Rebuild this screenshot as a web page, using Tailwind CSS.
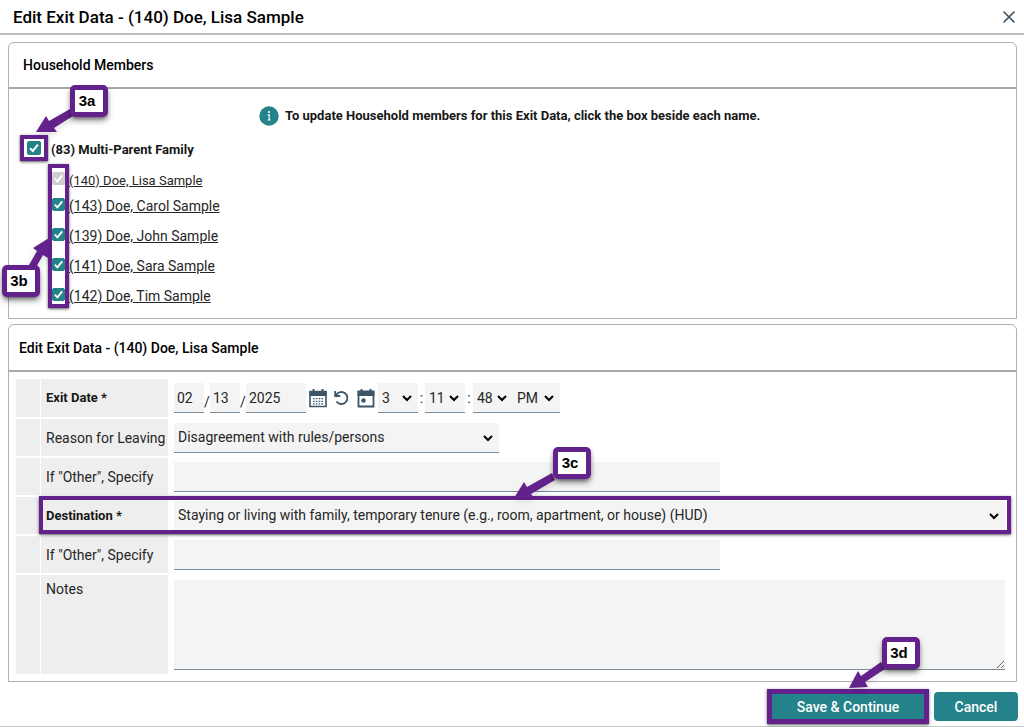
<!DOCTYPE html>
<html lang="en">
<head>
    <meta charset="UTF-8">
    <meta name="viewport" content="width=device-width, initial-scale=1.0">
    <title>Edit Exit Data</title>
    <script src="https://cdn.jsdelivr.net/npm/@tailwindcss/browser@4"></script>
</head>
<body class="bg-white font-['Roboto',sans-serif] text-[14px] leading-5 text-neutral-800">
    <svg class="hidden">
        <symbol id="check" viewBox="0 0 14 14"><path d="M3 7.2 5.8 10 11 3.6" fill="none" stroke="currentColor" stroke-width="2"/></symbol>
        <symbol id="chevron" viewBox="0 0 10 8"><path d="M1 2l4 4 4-4" fill="none" stroke="currentColor" stroke-width="2"/></symbol>
    </svg>

    <header class="flex h-[35px] items-center justify-between border-b-2 border-[#b9bec4] pl-[13px] pr-2">
        <h1 class="pt-px text-[17px] font-medium text-black">Edit Exit Data - (140) Doe, Lisa Sample</h1>
        <button type="button" aria-label="Close" class="text-[#3d5566]">
            <svg class="size-[14px]" viewBox="0 0 14 14"><path d="M2 2l10 10M12 2L2 12" fill="none" stroke="currentColor" stroke-width="1.7" stroke-linecap="round"/></svg>
        </button>
    </header>

    <main class="flex flex-col gap-[5px] px-2 pt-[7px]">
        <section class="mr-[-1px] rounded-t-md border border-[#b0b0b0]">
            <h2 class="flex h-[46px] items-center border-b-2 border-[#a8a8a8] pl-[14px] font-medium text-black">Household Members</h2>
            <div class="flex flex-col pb-[7px] pt-[17px]">
                <p class="flex items-center gap-1.5 pl-[250px] text-[13px] font-bold text-neutral-900">
                    <svg class="size-5" viewBox="0 0 20 20"><circle cx="10" cy="10" r="9.7" fill="#23828a"/><circle cx="10" cy="6" r="1.1" fill="#fff"/><path d="M8.6 8.8h1.6v5.2M8.6 14h3" fill="none" stroke="#fff" stroke-width="1.2"/></svg>
                    To update Household members for this Exit Data, click the box beside each name.
                </p>
                <div class="mt-[14px] flex h-5 items-center gap-[10px] pl-[18px]">
                    <div class="relative mb-1 grid">
                        <input type="checkbox" id="family" checked class="col-start-1 row-start-1 size-[14px] appearance-none rounded-xs border border-gray-500 checked:border-[#23828a] checked:bg-[#23828a]">
                        <svg class="pointer-events-none col-start-1 row-start-1 size-[14px] text-white"><use href="#check"/></svg>
                        <div class="pointer-events-none absolute -inset-x-[7px] -inset-y-[6px] border-4 border-[#63218c] shadow-sm shadow-black/50"></div>
                        <div class="pointer-events-none absolute -top-[56px] left-[43px]">
                            <svg class="absolute -left-[36px] top-[22px] h-[28px] w-[44px] overflow-visible drop-shadow-md" viewBox="0 0 44 28"><path d="M2 25 12 9l3 5L36 2l3 7-19 12 3 4z" fill="#63218c"/></svg>
                            <span class="relative flex h-8 w-[38px] items-center justify-center rounded-[5px] border-5 border-[#63218c] bg-white pr-1 font-['Liberation_Sans',sans-serif] text-[15px] font-bold text-black shadow-md shadow-black/50">3a</span>
                        </div>
                    </div>
                    <label for="family" class="text-[13px] font-bold text-neutral-900">(83) Multi-Parent Family</label>
                </div>
                <div class="relative ml-[43px] mt-[9px]">
                    <ul>
                        <li class="flex h-[22px] items-center gap-1">
                            <div class="mb-1 grid">
                                <input type="checkbox" id="m140" checked disabled class="col-start-1 row-start-1 size-[13px] appearance-none rounded-xs bg-[#cecece]">
                                <svg class="pointer-events-none col-start-1 row-start-1 size-[13px] text-white"><use href="#check"/></svg>
                            </div>
                            <label for="m140"><a href="#" class="text-[13px] underline">(140) Doe, Lisa Sample</a></label>
                        </li>
                        <li class="flex h-[30px] items-center gap-1">
                            <div class="mb-1 grid">
                                <input type="checkbox" id="m143" checked class="col-start-1 row-start-1 size-[13px] appearance-none rounded-xs border border-gray-500 checked:border-[#23828a] checked:bg-[#23828a]">
                                <svg class="pointer-events-none col-start-1 row-start-1 size-[13px] text-white"><use href="#check"/></svg>
                            </div>
                            <label for="m143"><a href="#" class="underline">(143) Doe, Carol Sample</a></label>
                        </li>
                        <li class="flex h-[30px] items-center gap-1">
                            <div class="mb-1 grid">
                                <input type="checkbox" id="m139" checked class="col-start-1 row-start-1 size-[13px] appearance-none rounded-xs border border-gray-500 checked:border-[#23828a] checked:bg-[#23828a]">
                                <svg class="pointer-events-none col-start-1 row-start-1 size-[13px] text-white"><use href="#check"/></svg>
                            </div>
                            <label for="m139"><a href="#" class="underline">(139) Doe, John Sample</a></label>
                        </li>
                        <li class="flex h-[30px] items-center gap-1">
                            <div class="mb-1 grid">
                                <input type="checkbox" id="m141" checked class="col-start-1 row-start-1 size-[13px] appearance-none rounded-xs border border-gray-500 checked:border-[#23828a] checked:bg-[#23828a]">
                                <svg class="pointer-events-none col-start-1 row-start-1 size-[13px] text-white"><use href="#check"/></svg>
                            </div>
                            <label for="m141"><a href="#" class="underline">(141) Doe, Sara Sample</a></label>
                        </li>
                        <li class="flex h-[30px] items-center gap-1">
                            <div class="mb-1 grid">
                                <input type="checkbox" id="m142" checked class="col-start-1 row-start-1 size-[13px] appearance-none rounded-xs border border-gray-500 checked:border-[#23828a] checked:bg-[#23828a]">
                                <svg class="pointer-events-none col-start-1 row-start-1 size-[13px] text-white"><use href="#check"/></svg>
                            </div>
                            <label for="m142"><a href="#" class="underline">(142) Doe, Tim Sample</a></label>
                        </li>
                    </ul>
                    <div class="pointer-events-none absolute -left-1 -top-[5px] h-[144px] w-[21px] border-4 border-[#63218c] shadow-sm shadow-black/50"></div>
                    <div class="pointer-events-none absolute -left-[50px] top-24">
                        <svg class="absolute -top-[30px] left-[26px] h-[40px] w-[24px] overflow-visible drop-shadow-md" viewBox="0 0 24 40"><path d="M21 3 5 13l4 3L1 30l6 4 8-14 5 3z" fill="#63218c"/></svg>
                        <span class="relative flex h-8 w-[38px] items-center justify-center rounded-[5px] border-5 border-[#63218c] bg-white pr-1 font-['Liberation_Sans',sans-serif] text-[15px] font-bold text-black shadow-md shadow-black/50">3b</span>
                    </div>
                </div>
            </div>
        </section>

        <form id="exit" onsubmit="event.preventDefault()" class="mr-[-1px] rounded-t-md border border-[#b0b0b0]">
            <h2 class="flex h-[47px] items-center border-b-2 border-[#a8a8a8] pl-[10px] font-medium text-black">Edit Exit Data - (140) Doe, Lisa Sample</h2>
            <div class="flex flex-col gap-[2px] p-[7px]">
                <div class="grid min-h-[38px] grid-cols-[24px_127px_1fr] gap-x-px">
                    <div class="bg-[#eeeeee]"></div>
                    <label for="month" class="flex items-center bg-[#eeeeee] pl-[5px] text-[13px] font-bold text-neutral-900">Exit Date *</label>
                    <div class="flex items-center pl-[5px]">
                        <input id="month" value="02" class="h-[30px] w-[30px] border-b border-[#7b8c9a] bg-[#f4f4f4] pl-[3px]">
                        <span class="w-1.5 pt-2 text-center">/</span>
                        <input aria-label="Day" value="13" class="h-[30px] w-[30px] border-b border-[#7b8c9a] bg-[#f4f4f4] pl-[3px]">
                        <span class="w-1.5 pt-2 text-center">/</span>
                        <input aria-label="Year" value="2025" class="h-[30px] w-[60px] border-b border-[#7b8c9a] bg-[#f4f4f4] pl-[3px]">
                        <div class="flex items-center gap-[6px] px-[3px] text-[#3d5566]">
                            <button type="button" aria-label="Pick date">
                                <svg class="h-5 w-[18px]" viewBox="0 0 18 20"><path d="M1 3.5h16v15H1z" fill="none" stroke="currentColor" stroke-width="1.6"/><path d="M.5 3h17v5H.5zM3.5 1h2v3h-2zM12.5 1h2v3h-2z" fill="currentColor"/><path d="M4 10.700h10M4 13.300h10M4 15.900h10" stroke="currentColor" stroke-width="1.300" stroke-dasharray="1.600 1.200"/></svg>
                            </button>
                            <button type="button" aria-label="Reset date">
                                <svg class="h-5 w-[18px]" viewBox="0 0 18 20"><path d="M3.200 7A6 6 0 1 1 3.500 13.500" fill="none" stroke="currentColor" stroke-width="1.800"/><path d="M2.200 3v5h5" fill="none" stroke="currentColor" stroke-width="1.800"/></svg>
                            </button>
                            <button type="button" aria-label="Today">
                                <svg class="h-5 w-[18px]" viewBox="0 0 18 20"><path d="M1.500 3.500h15v15h-15z" fill="none" stroke="currentColor" stroke-width="1.800"/><path d="M.6 3h16.800v5H.6zM3.500 1h2v3h-2zM12.500 1h2v3h-2z" fill="currentColor"/><circle cx="6.500" cy="12.500" r="2.200" fill="currentColor"/></svg>
                            </button>
                        </div>
                        <div class="grid w-10 items-center">
                            <select aria-label="Hour" class="col-start-1 row-start-1 h-[30px] w-full appearance-none border-b border-[#7b8c9a] bg-[#f4f4f4] pl-1"><option>3</option></select>
                            <svg class="pointer-events-none col-start-1 row-start-1 mr-1.5 h-2 w-2.5 justify-self-end text-black"><use href="#chevron"/></svg>
                        </div>
                        <span class="w-[7px] text-center">:</span>
                        <div class="grid w-10 items-center">
                            <select aria-label="Minute" class="col-start-1 row-start-1 h-[30px] w-full appearance-none border-b border-[#7b8c9a] bg-[#f4f4f4] pl-1"><option>11</option></select>
                            <svg class="pointer-events-none col-start-1 row-start-1 mr-1.5 h-2 w-2.5 justify-self-end text-black"><use href="#chevron"/></svg>
                        </div>
                        <span class="w-2 text-center">:</span>
                        <div class="grid w-10 items-center">
                            <select aria-label="Second" class="col-start-1 row-start-1 h-[30px] w-full appearance-none border-b border-[#7b8c9a] bg-[#f4f4f4] pl-1"><option>48</option></select>
                            <svg class="pointer-events-none col-start-1 row-start-1 mr-1.5 h-2 w-2.5 justify-self-end text-black"><use href="#chevron"/></svg>
                        </div>
                        <div class="grid w-[47px] items-center">
                            <select aria-label="AM or PM" class="col-start-1 row-start-1 h-[30px] w-full appearance-none border-b border-[#7b8c9a] bg-[#f4f4f4] pl-1"><option>PM</option></select>
                            <svg class="pointer-events-none col-start-1 row-start-1 mr-1.5 h-2 w-2.5 justify-self-end text-black"><use href="#chevron"/></svg>
                        </div>
                    </div>
                </div>
                <div class="grid min-h-[37px] grid-cols-[24px_127px_1fr] gap-x-px">
                    <div class="bg-[#eeeeee]"></div>
                    <label for="reason" class="flex items-center bg-[#eeeeee] pl-[5px]">Reason for Leaving</label>
                    <div class="flex items-center pl-[5px]">
                        <div class="grid w-[325px] items-center">
                            <select id="reason" class="col-start-1 row-start-1 h-[30px] w-full appearance-none border-b border-[#7b8c9a] bg-[#f4f4f4] pl-1"><option>Disagreement with rules/persons</option></select>
                            <svg class="pointer-events-none col-start-1 row-start-1 mr-1.5 h-2 w-2.5 justify-self-end text-black"><use href="#chevron"/></svg>
                        </div>
                    </div>
                </div>
                <div class="grid min-h-[37px] grid-cols-[24px_127px_1fr] gap-x-px">
                    <div class="bg-[#eeeeee]"></div>
                    <label for="reasonOther" class="flex items-center bg-[#eeeeee] pl-[5px]">If "Other", Specify</label>
                    <div class="flex items-center pl-[5px]">
                        <input id="reasonOther" class="h-[30px] w-[546px] border-b border-[#7b8c9a] bg-[#f4f4f4] pl-1">
                    </div>
                </div>
                <div class="relative grid min-h-[37px] grid-cols-[24px_127px_1fr] gap-x-px">
                    <div class="bg-[#eeeeee]"></div>
                    <label for="destination" class="flex items-center bg-[#eeeeee] pl-[5px] text-[13px] font-bold text-neutral-900">Destination *</label>
                    <div class="flex items-center pl-[5px] pr-1">
                        <div class="grid w-full items-center">
                            <select id="destination" class="col-start-1 row-start-1 h-[30px] w-full appearance-none border-b border-[#7b8c9a] bg-[#f4f4f4] pl-1"><option>Staying or living with family, temporary tenure (e.g., room, apartment, or house) (HUD)</option></select>
                            <svg class="pointer-events-none col-start-1 row-start-1 mr-1.5 h-2 w-2.5 justify-self-end text-black"><use href="#chevron"/></svg>
                        </div>
                    </div>
                    <div class="pointer-events-none absolute -right-[2px] -top-px bottom-0 left-[23px] border-4 border-[#63218c] shadow-sm shadow-black/50"></div>
                    <div class="pointer-events-none absolute -top-[50px] left-[537px]">
                        <svg class="absolute -left-[40px] top-[26px] h-[28px] w-[44px] overflow-visible drop-shadow-md" viewBox="0 0 44 28"><path d="M1 25 11 9l3 5L39 0l3 7-24 14 3 4z" fill="#63218c"/></svg>
                        <span class="relative flex h-8 w-[38px] items-center justify-center rounded-[5px] border-5 border-[#63218c] bg-white pr-1 font-['Liberation_Sans',sans-serif] text-[15px] font-bold text-black shadow-md shadow-black/50">3c</span>
                    </div>
                </div>
                <div class="grid min-h-[37px] grid-cols-[24px_127px_1fr] gap-x-px">
                    <div class="bg-[#eeeeee]"></div>
                    <label for="destinationOther" class="flex items-center bg-[#eeeeee] pl-[5px]">If "Other", Specify</label>
                    <div class="flex items-center pl-[5px]">
                        <input id="destinationOther" class="h-[30px] w-[546px] border-b border-[#7b8c9a] bg-[#f4f4f4] pl-1">
                    </div>
                </div>
                <div class="grid min-h-[99px] grid-cols-[24px_127px_1fr] gap-x-px">
                    <div class="bg-[#eeeeee]"></div>
                    <label for="notes" class="bg-[#eeeeee] pl-[5px] pt-1">Notes</label>
                    <div class="flex items-center pl-[5px] pr-1">
                        <textarea id="notes" class="h-[90px] w-full border-b border-[#7b8c9a] bg-[#f4f4f4] p-1"></textarea>
                    </div>
                </div>
            </div>
        </form>
    </main>

    <footer class="flex justify-end gap-2 border-b border-[#c8c8c8] pb-[5px] pr-1.5 pt-[10px]">
        <div class="relative">
            <button type="submit" form="exit" class="h-[29px] w-[156px] rounded bg-[#23828a] font-medium text-white">Save &amp; Continue</button>
            <div class="pointer-events-none absolute -inset-x-[3px] -inset-y-[3px] border-5 border-[#63218c] shadow-sm shadow-black/50"></div>
            <div class="pointer-events-none absolute -top-[55px] left-[112px]">
                <svg class="absolute -left-[34px] top-[25px] h-[28px] w-[44px] overflow-visible drop-shadow-md" viewBox="0 0 44 28"><path d="M1 26 10 9l3 5L33 0l4 7-20 13 3 5z" fill="#63218c"/></svg>
                <span class="relative flex h-8 w-[38px] items-center justify-center rounded-[5px] border-5 border-[#63218c] bg-white pr-1 font-['Liberation_Sans',sans-serif] text-[15px] font-bold text-black shadow-md shadow-black/50">3d</span>
            </div>
        </div>
        <button type="button" class="h-[29px] w-[84px] rounded bg-[#23828a] font-medium text-white">Cancel</button>
    </footer>
</body>
</html>
